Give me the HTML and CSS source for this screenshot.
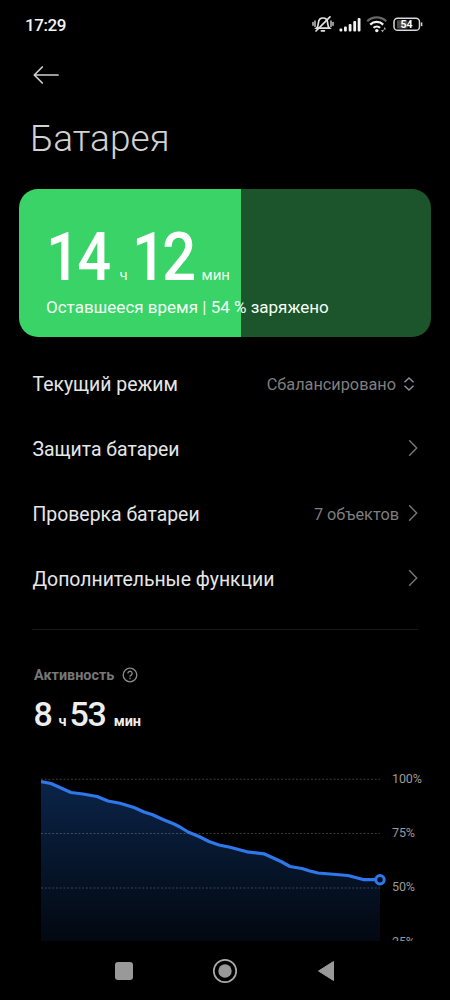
FILE: index.html
```html
<!DOCTYPE html>
<html lang="ru">
<head>
<meta charset="utf-8">
<title>Батарея</title>
<link rel="stylesheet" href="styles.css">
</head>
<body>
<div class="screen">
  <header class="status">
    <span class="clock">17:29</span>
    <svg class="status-icons" width="114" height="24" viewBox="0 0 114 24" fill="none">
      <g stroke="#e2e2e2" stroke-width="1.700" stroke-linecap="round">
        <path d="M6.500 16.200c1.700-1.500 1.700-3 1.900-5.500.3-3 2-4.700 4.600-4.700s4.300 1.700 4.600 4.700c.2 2.500.2 4 1.900 5.500z"/>
        <path d="M11.400 18.800h3M20 4.800L6 19"/>
        <path d="M5 9v5.500M3 10.300v3M21 9v5.500M23 10.300v3" stroke-width="1.300"/>
      </g>
      <g fill="#f2f2f2">
        <rect x="29.500" y="16.500" width="2.800" height="3" rx="1"/><rect x="34" y="14.500" width="2.800" height="5" rx="1"/><rect x="38.700" y="12" width="2.800" height="7.500" rx="1"/><rect x="43.300" y="9" width="2.800" height="10.500" rx="1"/><rect x="47.700" y="6" width="2.800" height="13.500" rx="1"/>
      </g>
      <g stroke-width="2.200">
        <path d="M57.200 9.300a13.600 13.600 0 0 1 19 0" stroke="#666"/>
        <path d="M60.200 12.600a9.200 9.200 0 0 1 13 0M63.500 15.800a4.800 4.800 0 0 1 6.600 0" stroke="#f2f2f2"/>
      </g>
      <circle cx="66.800" cy="18.600" r="1.700" fill="#f2f2f2"/>
      <path d="M71 18h3l-1.500 2.600zM73.300 17.500h2.700l-1.300-2.400z" fill="#aaa"/>
      <rect x="84" y="6.300" width="25.500" height="12" rx="3.600" stroke="#d8d8d8" stroke-width="1.500"/>
      <rect x="87" y="8.200" width="10.500" height="8.200" rx="1" fill="#484848"/>
      <path d="M111.600 10.500v3.600" stroke="#d8d8d8" stroke-width="1.500"/>
      <text class="charge" x="96.500" y="16" text-anchor="middle">54</text>
    </svg>
  </header>

  <nav class="toolbar">
    <svg width="28" height="20" viewBox="0 0 28 20" fill="none" stroke="#cfcfcf" stroke-width="1.700" stroke-linecap="round" stroke-linejoin="round"><path d="M10.300 2L2.300 10l8 8M2.300 10H26"/></svg>
  </nav>
  <h1 class="title">Батарея</h1>

  <section class="battery">
    <div class="remaining"><span class="big hours">14</span><span class="unit hour-unit">ч</span><span class="big minutes">12</span><span class="unit">мин</span></div>
    <p class="caption">Оставшееся время | 54 % заряжено</p>
  </section>

  <ul class="rows">
    <li class="row"><span class="label">Текущий режим</span><span class="value mode">Сбалансировано</span>
      <svg class="updown" width="12" height="16" viewBox="0 0 12 16" fill="none" stroke="#8a90a3" stroke-width="1.500"><path d="M1.500 6.200L6 2l4.500 4.200M1.500 9.800L6 14l4.500-4.200"/></svg></li>
    <li class="row"><span class="label">Защита батареи</span>
      <svg class="chevron" width="10" height="18" viewBox="0 0 10 18" fill="none" stroke="#777" stroke-width="1.400"><path d="M1.200 1.300L8.700 9l-7.500 7.700"/></svg></li>
    <li class="row"><span class="label">Проверка батареи</span><span class="value">7 объектов</span>
      <svg class="chevron" width="10" height="18" viewBox="0 0 10 18" fill="none" stroke="#777" stroke-width="1.400"><path d="M1.200 1.300L8.700 9l-7.500 7.700"/></svg></li>
    <li class="row"><span class="label">Дополнительные функции</span>
      <svg class="chevron" width="10" height="18" viewBox="0 0 10 18" fill="none" stroke="#777" stroke-width="1.400"><path d="M1.200 1.300L8.700 9l-7.500 7.700"/></svg></li>
  </ul>

  <section class="activity">
    <div class="activity-head"><h2>Активность</h2>
      <svg width="16" height="16" viewBox="0 0 16 16" fill="none" stroke="#8a8a8a" stroke-width="1.300"><circle cx="8" cy="8" r="6.800"/><path d="M5.900 6.400a2.100 2.100 0 1 1 3.300 1.700c-.8.500-1.200.8-1.200 1.600"/><path d="M8 10.800v1.400"/></svg>
    </div>
    <div class="used"><span class="num">8</span><span class="used-unit used-hour">ч</span><span class="num">53</span><span class="used-unit used-min">мин</span></div>
  </section>

  <section class="chart">
    <svg class="plot" width="346" height="171" viewBox="0 0 346 171" fill="none">
      <defs><linearGradient id="area" x1="0" y1="10" x2="0" y2="171" gradientUnits="userSpaceOnUse"><stop offset="0" stop-color="#0b2449"/><stop offset=".5" stop-color="#06162c"/><stop offset="1" stop-color="#030811"/></linearGradient></defs>
      <path d="M0 11.500L10 13.500 20 18 30 22.500 56 26.500 67 31 79 33.300 93 37.500 103 42 111 44.500 122 49.500 139 57 147 62 158 66.500 168 71.500 178 75 206 81.800 223 83.800 241 92 249 96.500 261 98.500 268 100.800 277 103 307 105.500 323 109.700H339V171H0z" fill="url(#area)"/>
      <g stroke="#a6a6a6" stroke-opacity=".36" stroke-width="1.100" stroke-dasharray="1.900 1.850"><path d="M0 9.200H339M0 63.500H339M0 118H339"/></g>
      <path d="M0 11.500L10 13.500 20 18 30 22.500 42 24 56 26.500 67 31 79 33.300 93 37.500 103 42 111 44.500 122 49.500 133 54 139 57 147 62 158 66.500 168 71.500 178 75 189 77.200 206 81.800 223 83.800 241 92 249 96.500 261 98.500 268 100.800 277 103 307 105.500 323 109.700H339" stroke="#2f78ec" stroke-width="3.200" stroke-linejoin="round"/>
      <circle cx="339" cy="109.700" r="4.200" fill="#050d1c" stroke="#2f78ec" stroke-width="3"/>
    </svg>
    <div class="scale"><span>100%</span><span>75%</span><span>50%</span><span>25%</span></div>
  </section>

  <footer class="navbar">
    <svg width="18" height="18" viewBox="0 0 18 18"><rect width="18" height="18" rx="3" fill="#999"/></svg>
    <svg width="26" height="26" viewBox="0 0 26 26"><circle cx="13" cy="13" r="11.200" fill="none" stroke="#aaa" stroke-width="1.700"/><circle cx="13" cy="13" r="6.700" fill="#999"/></svg>
    <svg width="18" height="22" viewBox="0 0 18 22"><path d="M1.500 11L16.500 1.500v19z" fill="#999" stroke="#999" stroke-linejoin="round"/></svg>
  </footer>
</div>
</body>
</html>
```
FILE: styles.css
```css
* { box-sizing: border-box; }
body { margin: 0; background: #000; }
.screen { width: 450px; height: 1000px; overflow: hidden; display: flex; flex-direction: column; background: #000; color: #e6e6e6; font-family: Roboto, "Noto Sans", sans-serif; }
.screen > * { flex: none; }
.status { height: 50px; display: flex; justify-content: space-between; padding: 0 26px 0 25px; }
.clock { font-size: 17px; font-weight: 500; line-height: 50px; color: #f4f4f4; letter-spacing: -.4px; }
.status-icons { margin-top: 12px; }
.charge { font: 700 10.500px Roboto, sans-serif; fill: #fff; }
.toolbar { height: 50px; padding: 15px 0 0 32px; }
.toolbar svg, .chevron, .updown, .plot { display: block; }
.title { margin: 0; height: 89px; padding-left: 30px; font-size: 37px; font-weight: 300; line-height: 77px; color: #d2d2d2; }
.battery { width: 412px; height: 148px; margin-left: 19px; border-radius: 19px; padding: 28px 0 0 27px; background: linear-gradient(90deg, #39d367 222.400px, #1c552b 222.400px); color: #fff; }
.remaining { display: flex; align-items: baseline; height: 80px; line-height: 80px; white-space: nowrap; }
.big { font-size: 67px; font-weight: 500; letter-spacing: -3px; transform: scaleX(.89); transform-origin: left; }
.hours { width: 73.500px; }
.minutes { width: 70px; letter-spacing: -4px; }
.unit { font-size: 15px; color: #ecfff0; }
.hour-unit { width: 12px; }
.caption { margin: 0; font-size: 17px; line-height: 20px; color: #f3fff5; white-space: nowrap; }
.rows { list-style: none; width: 386px; height: 278px; margin: 15px 0 0 32px; padding: 0; border-bottom: 1px solid #191919; }
.row { height: 65px; display: flex; align-items: center; white-space: nowrap; }
.label { flex: 1; font-size: 19.400px; padding-left: .5px; }
.value { font-size: 16.300px; color: #7e7e7e; margin-right: 9px; }
.mode { margin-right: 7px; }
.updown { margin-right: 3px; margin-top: -2px; }
.chevron { margin-top: -3px; }
.activity { padding-left: 34px; height: 140px; }
.activity-head { display: flex; align-items: center; gap: 8px; padding-top: 35px; height: 56px; }
.activity-head svg { margin-top: -2px; }
.activity-head h2 { margin: 0; font-size: 14.400px; line-height: 20px; font-weight: 700; color: #777; padding-top: 1px; }
.used { display: flex; align-items: baseline; height: 50px; line-height: 56px; color: #eee; }
.num { font-size: 34px; font-weight: 500; letter-spacing: -1.300px; margin-left: -.500px; }
.used-unit { font-size: 14.500px; font-weight: 700; }
.used-hour { margin: 0 3.500px 0 7px; }
.used-min { margin-left: 8px; }
.chart { height: 171px; display: flex; padding-left: 41px; overflow: hidden; }
.scale { display: grid; grid-template-rows: repeat(4, 54.200px); margin: -18px 0 0 5px; font-size: 12.500px; line-height: 54.200px; letter-spacing: -.1px; color: #999; }
.navbar { height: 60px; display: flex; align-items: center; justify-content: space-between; padding: 0 115px; }
```
